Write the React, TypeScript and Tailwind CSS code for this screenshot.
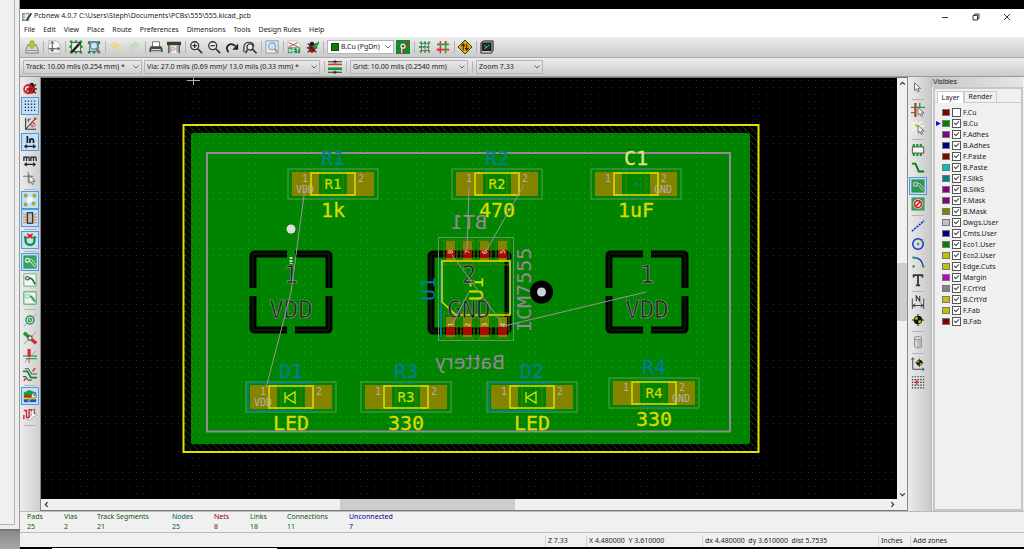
import { useState } from 'react';
import type { ReactNode } from 'react';
import clsx from 'clsx';

const pcbFont = "font-['DejaVu_Sans_Mono',monospace]";

const zoneIcon = (bg: string, fg: string) => (
  <>
    <rect x="1" y="1" width="14" height="14" fill={bg} stroke="#2f9a50" />
    <path d="M5.5 6h3c2 0 3 5 6 6" fill="none" stroke={fg} strokeWidth="3.6" />
    <path d="M5.5 6h3c2 0 3 5 6 6" fill="none" stroke="#22874a" strokeWidth="1.4" />
    <circle cx="5" cy="6" r="2.2" fill={bg} stroke={fg} strokeWidth="1.4" />
  </>
);

const target = (
  <>
    <circle cx="8" cy="8" r="4.5" fill="#e5d200" stroke="#111" />
    <path d="M8 8V3.5A4.5 4.5 0 0 1 12.5 8zM8 8v4.5A4.5 4.5 0 0 1 3.5 8z" fill="#111" />
    <path d="M8 1v14M1 8h14" stroke="#111" strokeWidth="1" />
  </>
);

const bug = (
  <>
    <path d="M3 4l3 2M13 4l-3 2M2 9h3M14 9h-3M3 14l3-2M13 14l-3-2" stroke="#222" strokeWidth="1.2" />
    <ellipse cx="8" cy="9.500" rx="4" ry="5" fill="#b3181c" />
    <circle cx="8" cy="4.500" r="2.600" fill="#1c1c1c" />
    <path d="M8 5v9" stroke="#222" />
    <circle cx="6.200" cy="9" r="1" fill="#222" />
    <circle cx="9.800" cy="11" r="1" fill="#222" />
  </>
);

const cursor = (x: number, y: number) => (
  <path
    transform={`translate(${x} ${y})`}
    d="M0 0v9l2.200-2 1.600 3.400 1.600-.8L3.900 6.400H7z"
    fill="#f4f4f4"
    stroke="#555"
    strokeWidth="0.9"
  />
);

const lens = (
  <>
    <circle cx="6.500" cy="6.500" r="4.500" fill="#eee" stroke="#333" strokeWidth="1.500" />
    <path d="M10 10l5 5" stroke="#333" strokeWidth="2" />
  </>
);

const chip = (
  <>
    <path d="M2 3h12M2 13h12" stroke="#149a2c" strokeWidth="3.500" strokeDasharray="2.500 1.500" />
    <rect x="1.500" y="4.500" width="13" height="7" fill="#f4f4f4" stroke="#444" />
  </>
);

const icons: Record<string, ReactNode> = {
  save: (
    <>
      <path d="M3 6h10l2 5v4H1v-4z" fill="#d5d5d5" stroke="#777" />
      <path d="M2 12h12" stroke="#888" />
      <path d="M6 1h4v4h3l-5 5-5-5h3z" fill="#a5cf3a" stroke="#79a41e" strokeWidth="0.7" />
    </>
  ),
  page: (
    <>
      <path d="M2 1h9l4 4v10H2z" fill="#fafafa" stroke="#aaa" />
      <path d="M6 2v11M2 10h12M4 4l2-2 2 2M4 11l2 2 2-2M12 8l2 2-2 2" fill="none" stroke="#333" />
    </>
  ),
  moduleEditor: (
    <>
      <rect x="3" y="3" width="10" height="10" fill="#eee" stroke="#444" />
      <path d="M1 2h14M1 14h14M2 6v5M14 6v5" stroke="#179a30" strokeWidth="3" strokeDasharray="3 2.500" />
      <path d="M12 2l2 2-9 10-3 1 1-3z" fill="#222" />
      <path d="M11 4l1 1" stroke="#fff" />
    </>
  ),
  moduleViewer: (
    <>
      <rect x="3" y="2" width="10" height="11" fill="#b9cbe0" stroke="#666" />
      <path d="M1 3h14M1 14h14" stroke="#179a30" strokeWidth="3" strokeDasharray="3 2.500" />
      <circle cx="8" cy="6.500" r="4" fill="#d4e5fa" stroke="#5f88b8" strokeWidth="1.300" />
      <path d="M10.500 9.500l4 5" stroke="#777" strokeWidth="2.500" />
    </>
  ),
  undo: <path d="M7 2L2 6l5 4V7.500c4 0 4.500 3 2 6.500 6-3 5.500-9.500-2-9.500z" fill="#f0dc8c" stroke="#e2c878" strokeWidth="0.6" />,
  redo: <path d="M9 2l5 4-5 4V7.500c-4 0-4.500 3-2 6.500-6-3-5.500-9.500 2-9.500z" fill="#bfe3b6" stroke="#a8d4a0" strokeWidth="0.6" />,
  print: (
    <>
      <path d="M4 8V2h8v6" fill="#fff" stroke="#666" />
      <path d="M2 7h12l1.500 3v4H.5v-4z" fill="#444" />
      <path d="M2.500 11h11M2 13.500h12" stroke="#ddd" strokeWidth="1.300" />
    </>
  ),
  plot: (
    <>
      <path d="M2 5v10M14 5v10" stroke="#665" strokeWidth="1.800" />
      <rect x="4" y="5" width="8" height="10" fill="#f5efe6" />
      <path d="M0 2h16v4H0z" fill="#3b3b2b" />
      <path d="M7 7.500l3 2.500-3 2.500z" fill="none" stroke="#e08a80" />
      <path d="M4.500 7v7M11.500 7v7" stroke="#3f66b0" />
    </>
  ),
  zoomIn: <>{lens}<path d="M4 6.500h5M6.500 4v5" stroke="#222" strokeWidth="1.300" /></>,
  zoomOut: <>{lens}<path d="M4 6.500h5" stroke="#222" strokeWidth="1.300" /></>,
  redraw: (
    <>
      <path d="M4 14C-1 7 6 2 12 7" fill="none" stroke="#222" strokeWidth="2" />
      <path d="M15 4v7H8.500z" fill="#222" />
    </>
  ),
  zoomFit: (
    <>
      <path d="M1 14V7.500C2 1 12 1 12.500 7.500" fill="none" stroke="#333" strokeWidth="1.300" />
      <circle cx="8" cy="8" r="3.500" fill="#eee" stroke="#333" strokeWidth="1.400" />
      <path d="M5 11l-2 4M10.500 10.500l5 4.500" stroke="#333" strokeWidth="1.800" />
    </>
  ),
  find: (
    <>
      <rect x="1" y="1" width="14" height="14" fill="#e7e9ec" stroke="#8d9299" />
      <circle cx="8" cy="7" r="4" fill="#c8dff8" stroke="#86a8ce" strokeWidth="1.300" />
      <path d="M11 10l3 3.500" stroke="#888" strokeWidth="2" />
    </>
  ),
  netlist: (
    <>
      <path d="M1 1h10l4 4v4H1z" fill="#f4f4f4" stroke="#bbb" strokeWidth="0.700" />
      <path d="M2 3l11 5M2 8l10-5" stroke="#c33" />
      <path d="M1 8.500h14V15H1z" fill="#278f45" />
      <path d="M2.500 14V10l2 4v-4M9 10H6.500v4H9M6.500 12H9M10.500 10H14M12.200 10v4" fill="none" stroke="#fff" strokeWidth="0.900" />
    </>
  ),
  drc: <>{bug}<path d="M9 6l2.500 3L16 2" fill="none" stroke="#169b36" strokeWidth="2.200" /></>,
  layerPair: (
    <>
      <rect width="16" height="16" fill="#148a2a" />
      <path d="M8 15V9l6-7" stroke="#cc2222" strokeWidth="2.500" fill="none" />
      <circle cx="8" cy="7" r="2.300" fill="none" stroke="#eee" strokeWidth="1.400" />
      <path d="M6.500 9.500V15" stroke="#ddd" strokeWidth="1.500" />
    </>
  ),
  modeModule: (
    <>
      <path d="M3 4h10M3 8h10M3 12h10M4 2v12M8 2v12M12 2v12" stroke="#555" strokeWidth="0.900" />
      <path d="M2 3h12M2 13h12M1 8h14" stroke="#26a644" strokeWidth="2.500" strokeDasharray="2.500 2.200" />
    </>
  ),
  modeTrack: (
    <>
      <path d="M5 1v14M1 11h14" stroke="#d33" strokeWidth="1.800" />
      <path d="M11 1v14M1 5h14" stroke="#27a044" strokeWidth="1.800" />
      <path d="M11 1v3M1 11h3" stroke="#d33" strokeWidth="2" />
    </>
  ),
  freeroute: (
    <>
      <path d="M8 0l8 8-8 8-8-8z" fill="#eea500" stroke="#2a2a10" />
      <path d="M6 12V5M4 7l2-2.500L8 7M10 4v7M8 9l2 2.500L12 9" fill="none" stroke="#222" strokeWidth="1.200" />
    </>
  ),
  console: (
    <>
      <path d="M1 3l3-2h11v11l-2 3H1z" fill="#9a9a9a" stroke="#222" />
      <rect x="3" y="3.500" width="9.500" height="8.500" fill="#1b2d24" stroke="#111" />
      <path d="M5 6l2.500 2L5 10M7 9l4-3.500" fill="none" stroke="#5fc98b" />
      <path d="M2 13.500h10" stroke="#eee" />
    </>
  ),
  trackWidth: (
    <>
      <path d="M0 5h16" stroke="#d33" strokeWidth="1.800" />
      <path d="M0 10h16" stroke="#159a2d" strokeWidth="3" />
      <path d="M0 2h5M11 2h5M0 14h5M11 14h5M8 0v4M8 12v4" stroke="#333" strokeWidth="1.200" />
      <path d="M5 2h6M5 14h6" stroke="#333" strokeWidth="1.800" />
    </>
  ),
  drcOff: (
    <>
      <g transform="translate(2 0)">{bug}</g>
      <circle cx="6" cy="9.500" r="4.800" fill="none" stroke="#cf1f25" strokeWidth="1.900" />
      <path d="M2.500 13l7-7" stroke="#cf1f25" strokeWidth="1.800" />
    </>
  ),
  grid: <path d="M2 2.500h13M2 6h13M2 9.500h13M2 13h13" stroke="#1d3450" strokeWidth="1.500" strokeDasharray="1.500 2" />,
  polar: (
    <>
      <path d="M3 1v13h12M3 14L14 2" fill="none" stroke="#333" strokeWidth="1.200" />
      <path d="M6 6V2M6 4c1-2 2-2 3-1.500" fill="none" stroke="#333" />
      <circle cx="11.500" cy="9" r="2.400" fill="none" stroke="#b55" />
      <path d="M10 12l3-6" stroke="#b55" />
      <circle cx="14" cy="2" r="1.500" fill="#e22" />
    </>
  ),
  inches: (
    <>
      <path d="M5 1v8M8 9V4M8 6c1-2 4-2 4 .5V9" fill="none" stroke="#222" strokeWidth="2" />
      <path d="M2 13h12M4.500 11L2 13l2.500 2M11.500 11l2.500 2-2.500 2" fill="none" stroke="#222" strokeWidth="1.300" />
    </>
  ),
  mm: (
    <>
      <path d="M1 9V4M1 6c1-2 3-2 3 0v3M4 6c1-2 3-2 3 0v3M9 9V4M9 6c1-2 3-2 3 0v3M12 6c1-2 3-2 3 0v3" fill="none" stroke="#222" strokeWidth="1.400" />
      <path d="M2 13h12M4.500 11L2 13l2.500 2M11.500 11l2.500 2-2.500 2" fill="none" stroke="#222" strokeWidth="1.300" />
    </>
  ),
  crosshair: <><path d="M6 1v12M0 6h12" stroke="#666" />{cursor(7, 5)}</>,
  ratsnest: (
    <>
      <path d="M3 3l10 10M13 2L3 14M8 3v9M4 8h9" stroke="#f7f7f7" strokeWidth="1.500" />
      {[[3, 3], [13, 3], [3, 13], [12, 12]].map(([x, y]) => (
        <circle key={`${x}-${y}`} cx={x} cy={y} r="1.800" fill="#b3c51a" stroke="#6c7a10" strokeWidth="0.700" />
      ))}
    </>
  ),
  moduleRats: (
    <>
      <path d="M0 3l5 2M0 7h5M0 10h5M0 14l5-2M16 3l-5 2M16 7h-5M16 10h-5M16 14l-5-2" stroke="#e9812c" strokeWidth="1.200" />
      <rect x="5" y="2" width="6" height="12" fill="#bbb" stroke="#333" strokeWidth="1.400" />
    </>
  ),
  autoDelete: (
    <>
      <path d="M1 5h2v4c0 6 10 6 10 0V5h2" fill="none" stroke="#128c35" strokeWidth="2.600" />
      <path d="M5 1l6 5M11 1L5 6" stroke="#d81f26" strokeWidth="2.200" />
    </>
  ),
  zoneFilled: zoneIcon('#3f9f66', '#cfeeda'),
  zoneOff: (
    <>
      <rect x="1" y="1" width="14" height="14" fill="#f6f6f6" stroke="#5eae78" />
      <path d="M7 6h2c2 0 3 4 5 7" fill="none" stroke="#187a35" strokeWidth="2" />
      <circle cx="5" cy="6" r="2" fill="none" stroke="#333" strokeWidth="1.200" />
    </>
  ),
  zoneOutline: zoneIcon('#eef4ef', '#a8d4b4'),
  viaSketch: (
    <>
      <path d="M1 15L15 1" stroke="#999" />
      <circle cx="8" cy="8" r="4.500" fill="none" stroke="#2e9a55" strokeWidth="1.800" />
      <circle cx="8" cy="8" r="1.800" fill="none" stroke="#2e9a55" strokeWidth="1.300" />
    </>
  ),
  padSketch: (
    <>
      <path d="M1 15L15 1" stroke="#999" />
      <path d="M1 2l6 5" stroke="#169a2f" strokeWidth="4" />
      <path d="M10 10l5 4" stroke="#dc2525" strokeWidth="4" />
      <circle cx="8" cy="8" r="2.500" fill="#eee" stroke="#555" strokeWidth="1.300" />
    </>
  ),
  trackSketch: (
    <>
      <path d="M2 15L15 2" stroke="#999" />
      <path d="M7 0v9" stroke="#dc2525" strokeWidth="3.500" />
      <path d="M0 8h6" stroke="#444" />
      <path d="M3 11h13M8 8h8" stroke="#31a950" strokeWidth="1.500" />
      <path d="M7 11v5" stroke="#dc2525" />
    </>
  ),
  contrast: (
    <>
      <path d="M0 5h5l4 7h7" fill="none" stroke="#138b2d" strokeWidth="2" />
      <path d="M2 2h4l4 6h6M0 11h3l3 4h4" fill="none" stroke="#555" strokeWidth="1.200" />
      <path d="M14 1l-3 4M3 13l-2 3" stroke="#dc2525" strokeWidth="1.600" />
    </>
  ),
  layers: (
    <>
      <path d="M1 4l6-3 8 3v9H1z" fill="#1b9d3b" />
      <path d="M1 7h14v3H1z" fill="#d3242b" />
      <path d="M1 10h14v2H1z" fill="#edd821" />
      <path d="M1 12h14v3H1z" fill="#2451b8" />
      <path d="M4 15l6-6a3 3 0 0 1 4-4l-2 2 1 1 2-2a3 3 0 0 1-4 4l-5 5z" fill="#f4f4f4" stroke="#555" strokeWidth="0.700" />
    </>
  ),
  microwave: (
    <>
      <path d="M1 4h3v8h3V3h3v6h3V2M1 14V9" fill="none" stroke="#cf2830" strokeWidth="1.600" />
      <path d="M5 15l5-6a3 3 0 0 1 3-5l-1 3 1 1 2-1a3 3 0 0 1-3 4l-5 5z" fill="#f7f7f7" stroke="#888" strokeWidth="0.700" />
    </>
  ),
  select: <>{cursor(4, 2)}</>,
  highlight: (
    <>
      <path d="M5 0v16" stroke="#dc2525" strokeWidth="2.500" />
      <path d="M0 5h16M10 0v5M0 11h5" stroke="#249a42" strokeWidth="1.600" />
      {cursor(8, 5)}
    </>
  ),
  localRats: (
    <>
      <path d="M6 6L0 0M6 6l7-6M6 6H0M6 6v10M6 6l-6 7M6 6h10M6 6V0" stroke="#fafafa" strokeWidth="1.300" />
      <circle cx="6" cy="5" r="2" fill="#d6ce18" />
      {cursor(8, 5)}
    </>
  ),
  addModule: chip,
  addTrack: <path d="M1 3h4l4 9h6" fill="none" stroke="#087a1c" strokeWidth="2.200" />,
  addZone: zoneIcon('#2f9553', '#b9c9bf'),
  keepout: (
    <>
      <rect x="0.500" y="0.500" width="15" height="15" fill="#409d60" />
      <circle cx="8" cy="8" r="5.500" fill="#fff" />
      <circle cx="8" cy="8" r="4" fill="none" stroke="#d61f27" strokeWidth="2" />
      <path d="M5 11l6-6" stroke="#d61f27" strokeWidth="1.800" />
    </>
  ),
  line: <path d="M1 14L15 2" stroke="#1732c0" strokeWidth="1.800" strokeDasharray="2.500 1" />,
  circle: (
    <>
      <circle cx="8" cy="8" r="6" fill="none" stroke="#1732c0" strokeWidth="1.700" />
      <circle cx="8" cy="8" r="1.500" fill="#31a34c" />
      <circle cx="12.500" cy="4" r="1.500" fill="#31a34c" />
    </>
  ),
  arc: (
    <>
      <path d="M3 3c6 0 10 4 11 10" fill="none" stroke="#1732c0" strokeWidth="1.700" />
      <circle cx="3" cy="3" r="1.500" fill="#31a34c" />
      <circle cx="3" cy="13" r="1.500" fill="#31a34c" />
      <circle cx="14" cy="13" r="1.500" fill="#31a34c" />
    </>
  ),
  text: <path d="M3 5V2.500h10V5M8 3v11M5.500 14h5" fill="none" stroke="#333" strokeWidth="2" />,
  dimension: (
    <>
      <path d="M1.500 4v12M14.500 4v12M2 12h12M5 10l-3 2 3 2M11 10l3 2-3 2" fill="none" stroke="#333" />
      <path d="M6 7V1l4 6V1" fill="none" stroke="#333" strokeWidth="1.200" />
    </>
  ),
  target,
  trash: (
    <>
      <path d="M4 4v9c0 2.500 8 2.500 8 0V4z" fill="#bcbcb8" stroke="#777" strokeWidth="0.800" />
      <ellipse cx="8" cy="3.500" rx="4.500" ry="1.800" fill="#deded9" stroke="#777" strokeWidth="0.800" />
      <path d="M6 6v8" stroke="#e8e8e8" strokeWidth="1.500" />
    </>
  ),
  origin: (
    <>
      <path d="M2 1v13h13M.5 3L2 1l1.500 2M13 12.500l2 1.500-2 1.500" fill="none" stroke="#333" />
      <g transform="translate(4 1) scale(.7)">{target}</g>
    </>
  ),
  gridOrigin: (
    <>
      <path d="M1 2h14M1 5.200h14M1 8.400h14M1 11.600h14M1 14.600h14" stroke="#333" strokeWidth="1.400" strokeDasharray="1.600 1.600" />
      <path d="M6.500 6v5M4 8.400h5" stroke="#e02020" strokeWidth="1.500" />
    </>
  ),
};

const SEP = '|';

const topTools = ['save', SEP, 'page', SEP, 'moduleEditor', 'moduleViewer', SEP, 'undo', 'redo', SEP, 'print', 'plot', SEP, 'zoomIn', 'zoomOut', 'redraw', 'zoomFit', SEP, 'find', SEP, 'netlist', 'drc', SEP];
const topToolsEnd = ['layerPair', SEP, 'modeModule', 'modeTrack', SEP, 'freeroute', SEP, 'console'];
const leftTools = ['drcOff', 'grid', 'polar', 'inches', 'mm', 'crosshair', SEP, 'ratsnest', 'moduleRats', SEP, 'autoDelete', SEP, 'zoneFilled', 'zoneOff', 'zoneOutline', SEP, 'viaSketch', 'padSketch', 'trackSketch', 'contrast', SEP, 'layers', 'microwave', SEP];
const rightTools = ['select', SEP, 'highlight', 'localRats', SEP, 'addModule', 'addTrack', 'addZone', 'keepout', SEP, 'line', 'circle', 'arc', 'text', SEP, 'dimension', 'target', SEP, 'trash', SEP, 'origin', 'gridOrigin'];
const pressed = ['grid', 'inches', 'ratsnest', 'moduleRats', 'autoDelete', 'zoneFilled', 'layers', 'addZone'];

const menus = ['File', 'Edit', 'View', 'Place', 'Route', 'Preferences', 'Dimensions', 'Tools', 'Design Rules', 'Help'];

const layers = [
  { name: 'F.Cu', color: '#840000' },
  { name: 'B.Cu', color: '#008400' },
  { name: 'F.Adhes', color: '#840084' },
  { name: 'B.Adhes', color: '#000084' },
  { name: 'F.Paste', color: '#840000' },
  { name: 'B.Paste', color: '#00c2c2' },
  { name: 'F.SilkS', color: '#008484' },
  { name: 'B.SilkS', color: '#840084' },
  { name: 'F.Mask', color: '#840084' },
  { name: 'B.Mask', color: '#848400' },
  { name: 'Dwgs.User', color: '#c2c2c2' },
  { name: 'Cmts.User', color: '#000084' },
  { name: 'Eco1.User', color: '#008400' },
  { name: 'Eco2.User', color: '#c2c200' },
  { name: 'Edge.Cuts', color: '#c2c200' },
  { name: 'Margin', color: '#c200c2' },
  { name: 'F.CrtYd', color: '#848484' },
  { name: 'B.CrtYd', color: '#c2c200' },
  { name: 'F.Fab', color: '#c2c200' },
  { name: 'B.Fab', color: '#840000' },
];

const stats = [
  { label: 'Pads', value: '25', className: 'w-[37px] text-[#0a5a0a]' },
  { label: 'Vias', value: '2', className: 'w-[33px] text-[#0a5a0a]' },
  { label: 'Track Segments', value: '21', className: 'w-[75px] text-[#0a5a0a]' },
  { label: 'Nodes', value: '25', className: 'w-[42px] text-[#005a5a]' },
  { label: 'Nets', value: '8', className: 'w-[36px] text-[#8a0000]' },
  { label: 'Links', value: '18', className: 'w-[37px] text-[#0a5a0a]' },
  { label: 'Connections', value: '11', className: 'w-[62px] text-[#0a5a0a]' },
  { label: 'Unconnected', value: '7', className: 'text-[#00008a]' },
];

function ToolStrip({ items, vertical = false }: { items: string[]; vertical?: boolean }) {
  return (
    <div className={clsx('flex shrink-0 items-center', vertical && 'flex-col')}>
      {items.map((item, i) =>
        item === SEP ? (
          <span key={i} className={clsx('flex items-center justify-center', vertical ? 'h-1 w-full' : 'h-[18px] w-1')}>
            <span className={clsx('bg-[#b4b4b4]', vertical ? 'h-px w-3' : 'h-3 w-px')} />
          </span>
        ) : (
          <button
            key={i}
            type="button"
            aria-label={item}
            className={clsx(
              'flex size-[18px] items-center justify-center border',
              pressed.includes(item) ? 'border-[#4a9be0] bg-[#c4dff6]' : 'border-transparent',
            )}
          >
            <svg viewBox="0 0 16 16" className="size-[14px]">{icons[item]}</svg>
          </button>
        ),
      )}
    </div>
  );
}

function ToolSelect({ label, value, className, children }: { label: string; value: string; className: string; children?: ReactNode }) {
  return (
    <div className={clsx('relative flex h-[14px] shrink-0 items-center border border-[#b5b5b5]', className)}>
      {children}
      <select aria-label={label} defaultValue={value} className="h-full min-w-0 flex-1 appearance-none bg-transparent pl-[2px] text-[7px] leading-3 outline-none">
        <option>{value}</option>
      </select>
      <svg viewBox="0 0 6 4" className="pointer-events-none absolute right-[2px] h-1 w-[6px]">
        <path d="M0.500 0.500L3 3l2.500-2.500" fill="none" stroke="#555" strokeWidth="0.900" />
      </svg>
    </div>
  );
}

interface PartProps {
  cx: number;
  cy: number;
  name: string;
  value: string;
  diode?: boolean;
  pin1?: string;
  pin2?: string;
  selected?: boolean;
}

// Two-pad SMD footprint: courtyard, pads, fab outline, reference and value
function Part({ cx, cy, name, value, diode, pin1, pin2, selected }: PartProps) {
  const nameColor = selected ? '#dfe08c' : '#007f94';
  return (
    <g transform={`translate(${cx} ${cy})`} textAnchor="middle">
      <rect x="-45" y="-15" width="90" height="30" fill="none" stroke="#5f9a5f" />
      <rect x="-41" y="-12" width="27" height="24" fill="#848400" />
      <rect x="14" y="-12" width="27" height="24" fill="#848400" />
      <path d="M-10-11v22M10-11v22" stroke="#4c7a00" />
      <path d="M-13-14h26M-13 14h26" stroke="#008484" />
      {diode && <path d="M24-14h-67v28h67" fill="none" stroke="#008484" strokeWidth="1.500" />}
      <rect x="-22" y="-11" width="44" height="22" fill="none" stroke="#e0e000" strokeWidth="1.500" />
      {diode && <path d="M-6-5V6M4-5V6L-5 0.500z" fill="none" stroke="#e0e000" strokeWidth="1.300" />}
      {!diode && !selected && <text y="5" fontSize="14" fill="#d8d800" stroke="#d8d800" strokeWidth="0.200">{name}</text>}
      {selected && <path d="M-2 0h4M0-2v4" stroke="#008484" />}
      <text y="-19" fontSize="20" fill={nameColor} stroke={nameColor} strokeWidth="0.300">{name}</text>
      <text y="33" fontSize="20" fill="#dada00" stroke="#dada00" strokeWidth="0.300">{value}</text>
      <g fontSize="10" fill="#b4b0b0">
        <text x="-28" y="-2">1</text>
        <text x="28" y="-2">2</text>
        {pin1 && <text x="-28" y="9">{pin1}</text>}
        {pin2 && <text x="27" y="9">{pin2}</text>}
      </g>
    </g>
  );
}

function ThermalPad({ cx }: { cx: number }) {
  const corner = 'M-38-4V-36q0-2 2-2H-4';
  return (
    <g transform={`translate(${cx} 292)`}>
      {['', 'scale(-1 1)', 'scale(1 -1)', 'scale(-1 -1)'].map((t) => (
        <g key={t} transform={t} fill="none">
          <path d={corner} stroke="#000" strokeWidth="7" />
          <path d={corner} stroke="#003800" />
        </g>
      ))}
      <g textAnchor="middle" fontSize="24" fill="#042c04" stroke="#a193a1" strokeWidth="0.600">
        <text y="-9">1</text>
        <text y="26">VDD</text>
      </g>
    </g>
  );
}

function Board() {
  const pins = [446, 463, 480, 498];
  return (
    <svg viewBox="41 78 856 421" className={clsx('block size-full bg-black', pcbFont)}>
      <defs>
        <pattern id="dots" width="7" height="7" patternUnits="userSpaceOnUse">
          <rect x="3" y="3" width="1" height="1" fill="#fff" opacity="0.160" />
        </pattern>
        <pattern id="hatch" width="7" height="7" patternUnits="userSpaceOnUse">
          <path d="M0 0l7 7" stroke="#083c08" strokeWidth="1" />
        </pattern>
      </defs>
      <rect x="183" y="125" width="575" height="327" fill="url(#hatch)" />
      <rect x="191" y="133" width="559" height="311" rx="2" fill="#008400" />
      <rect x="41" y="78" width="856" height="421" fill="url(#dots)" />
      <rect x="183.500" y="125" width="575" height="327" fill="none" stroke="#e2e200" strokeWidth="2" />
      <rect x="207" y="153" width="523" height="278.500" fill="none" stroke="#968896" strokeWidth="2" />

      <Part cx={333} cy={184} name="R1" value="1k" pin1="VDD" />
      <Part cx={497} cy={184} name="R2" value="470" />
      <Part cx={636} cy={184} name="C1" value="1uF" pin2="GND" selected />
      <Part cx={291} cy={397} name="D1" value="LED" pin1="VDD" diode />
      <Part cx={406} cy={397} name="R3" value="330" />
      <Part cx={532} cy={397} name="D2" value="LED" diode />
      <Part cx={654} cy={393} name="R4" value="330" pin2="GND" />

      <ThermalPad cx={291} />
      <ThermalPad cx={647} />

      {/* battery ground pad with the timer on top */}
      <rect x="431" y="254" width="77" height="77" rx="2" fill="none" stroke="#000" strokeWidth="7" />
      <rect x="431" y="254" width="77" height="77" rx="2" fill="none" stroke="#003800" />
      <rect x="438.500" y="237.500" width="75" height="103" fill="none" stroke="#5f9a5f" />
      {pins.map((x) => (
        <g key={x}>
          <rect x={x - 2} y="240" width="13" height="25" fill="none" stroke="#4c7a00" />
          <rect x={x - 2} y="313" width="13" height="25" fill="none" stroke="#4c7a00" />
          <rect x={x} y="241" width="9" height="20" fill="#848400" />
          <rect x={x} y="317" width="9" height="20" fill="#848400" />
          <rect x={x} y="250" width="9" height="8" fill="#a80c00" />
          <rect x={x} y="327" width="9" height="8" fill="#a80c00" />
        </g>
      ))}
      <path d="M441 259v78M510.500 259v55" stroke="#008484" strokeWidth="2" />
      <path d="M442 261h68v54h-54l-14-13z" fill="none" stroke="#e0e000" strokeWidth="1.500" />
      <g fontSize="7" fill="#e6e0d8" textAnchor="middle">
        {['8', '7', '6', '5'].map((n, i) => (
          <text key={n} transform={`translate(${pins[i] + 7} 252) rotate(-90)`}>{n}</text>
        ))}
        {['1', '2', '3', '4'].map((n, i) => (
          <text key={n} transform={`translate(${pins[i] + 7} 325) rotate(-90)`}>{n}</text>
        ))}
      </g>
      <g fontSize="20">
        <text transform="translate(435 301) rotate(-90)" fill="#007f94">U1</text>
        <text transform="translate(483 301) rotate(-90)" fill="#dada00">U1</text>
        <text transform="translate(531 332) rotate(-90)" fill="#968896">ICM7555</text>
        <text transform="translate(487 229) scale(-1 1)" fill="#968896">BT1</text>
        <text transform="translate(505 369) scale(-1 1)" fill="#968896" className="font-['DejaVu_Sans',sans-serif] text-[19px]">Battery</text>
      </g>
      <g textAnchor="middle" fontSize="24" fill="#042c04" stroke="#a193a1" strokeWidth="0.600">
        <text x="469" y="283">2</text>
        <text x="469" y="318">GND</text>
      </g>

      <circle cx="541.500" cy="292" r="11.500" fill="#000" />
      <circle cx="541.500" cy="292" r="4.500" fill="#d0d0d0" />
      <circle cx="291" cy="229" r="4.500" fill="#dedede" />
      <path d="M291 257v7" stroke="#b8dcb8" strokeWidth="3" strokeDasharray="2 1" />

      <g fill="none" stroke="#a090a0">
        <path d="M305 188l-14 104-25 96" />
        <path d="M469 187l-2 65M524 185l-38 66M452 255l52 71M469 292l-17 33M504 326l142-34" />
      </g>
      <path d="M193.500 78v7M187 80.500h13" stroke="#b0b0b0" />
    </svg>
  );
}

function LayerPanel() {
  const [visible, setVisible] = useState<string[]>(layers.slice(1).map((l) => l.name));

  const toggle = (name: string) =>
    setVisible((prev) => (prev.includes(name) ? prev.filter((n) => n !== name) : [...prev, name]));

  return (
    <aside className="flex w-[93px] shrink-0 flex-col border-l border-[#bbb] bg-[#f0f0f0] pr-px">
      <h2 className="h-[10px] bg-gradient-to-r from-[#c8c8c8] to-[#e6e6e6] pl-px font-['Liberation_Sans',sans-serif] text-[7px] leading-[9px]">Visibles</h2>
      <div className="ml-px flex flex-1 flex-col border-2 border-[#c6c6c6] bg-[#f0f0f0]">
        <div role="tablist" className="flex items-end border-b border-[#ccc] pt-[2px] pl-[2px]">
          <button type="button" role="tab" aria-selected="true" className="-mb-px h-3 w-[27px] border border-b-0 border-[#ccc] bg-white leading-[11px]">Layer</button>
          <button type="button" role="tab" aria-selected="false" className="h-[11px] w-[33px] border border-b-0 border-[#ccc] leading-[10px]">Render</button>
        </div>
        <ul className="pt-1">
          {layers.map(({ name, color }) => (
            <li key={name} className="flex h-[11px] items-center">
              <svg viewBox="0 0 6 6" className="mr-px ml-px size-[5px]">
                {name === 'B.Cu' && <path d="M0 0l6 3-6 3z" fill="#1010e0" />}
              </svg>
              <label className="flex items-center gap-px">
                <span className="h-[7px] w-2 border border-[#777]" style={{ backgroundColor: color }} />
                <input
                  type="checkbox"
                  checked={visible.includes(name)}
                  onChange={() => toggle(name)}
                  className="ml-px grid size-[9px] appearance-none place-items-center border border-[#555] bg-white checked:after:mb-[2px] checked:after:block checked:after:h-[3px] checked:after:w-[5px] checked:after:-rotate-45 checked:after:border-b checked:after:border-l checked:after:border-[#444] checked:after:content-['']"
                />
                <span className="pl-px leading-[11px]">{name}</span>
              </label>
            </li>
          ))}
        </ul>
      </div>
    </aside>
  );
}

function ScrollArrow({ d, label }: { d: string; label: string }) {
  return (
    <button type="button" aria-label={label} className="flex size-[10px] shrink-0 items-center justify-center">
      <svg viewBox="0 0 6 6" className="size-[7px]"><path d={d} fill="none" stroke="#333" /></svg>
    </button>
  );
}

export default function App() {
  return (
    <div className="flex h-screen overflow-hidden bg-black font-['Noto_Sans','Open_Sans',sans-serif] text-[7px] text-[#1a1a1a]">
      {/* edge of the window behind */}
      <div className="flex w-5 shrink-0 flex-col">
        <div className="flex flex-1 bg-[#ededed]">
          <div className="mb-1 flex-1 border-r border-b border-[#b4b4b4] bg-[#f0f0f0]" />
          <div className="w-[5px] border-r border-[#999]" />
        </div>
        <div className="h-5 border-t-2 border-[#777] bg-gradient-to-b from-[#8a8a8a] to-[#a8a8a8]" />
      </div>

      <div className="flex min-w-0 flex-1 flex-col pt-[9px]">
        <header className="bg-white">
          <div className="flex h-[15px] items-center pl-[2px]">
            <svg viewBox="0 0 16 16" className="size-[10px]">
              <rect x="1" y="2" width="10" height="12" fill="#e5e5e5" stroke="#666" />
              <path d="M2 4h2M2 8h2M2 12h2" stroke="#179a30" strokeWidth="2" />
              <path d="M14 1l2 2-7 10-3 1 1-3z" fill="#333" />
              <path d="M12 4l2 2" stroke="#d33" />
            </svg>
            <h1 className="flex-1 pl-[2px] text-[7px] whitespace-nowrap">Pcbnew 4.0.7 C:\Users\Steph\Documents\PCBs\555\555.kicad_pcb</h1>
            <div className="flex gap-[21px] pr-3">
              {[
                { label: 'Minimize', d: 'M2 5.500h6' },
                { label: 'Restore', d: 'M2 3.500h4.500V8H2zM3.500 3V2H8v4.500H7' },
                { label: 'Close', d: 'M2 2l6 6M8 2L2 8' },
              ].map(({ label, d }) => (
                <button key={label} type="button" aria-label={label} className="size-[10px]">
                  <svg viewBox="0 0 10 10" className="size-[10px]"><path d={d} fill="none" stroke="#333" /></svg>
                </button>
              ))}
            </div>
          </div>
          <nav className="flex h-[13px] items-center gap-2 pl-1">
            {menus.map((menu) => (
              <button key={menu} type="button" className="whitespace-nowrap">{menu}</button>
            ))}
          </nav>
        </header>

        <div className="flex h-[21px] shrink-0 items-center border-b border-[#aaa] bg-gradient-to-b from-[#eee] to-[#cacaca] pl-[3px]">
          <ToolStrip items={topTools} />
          <ToolSelect label="Active layer" value="B.Cu (PgDn)" className="ml-[2px] w-[67px] bg-white pl-[3px]">
            <span className="size-2 border border-[#333] bg-[#008400]" />
          </ToolSelect>
          <ToolStrip items={topToolsEnd} />
        </div>
        <div className="flex h-[19px] shrink-0 items-center gap-[2px] border-b border-[#999] bg-gradient-to-b from-[#eee] to-[#cacaca] pl-[3px]">
          <ToolSelect label="Track width" value="Track: 10.00 mils (0.254 mm) *" className="w-[119px]" />
          <ToolSelect label="Via size" value="Via: 27.0 mils (0.69 mm)/ 13.0 mils (0.33 mm) *" className="w-[176px]" />
          <ToolStrip items={[SEP, 'trackWidth', SEP]} />
          <ToolSelect label="Grid" value="Grid: 10.00 mils (0.2540 mm)" className="w-[118px]" />
          <ToolStrip items={[SEP]} />
          <ToolSelect label="Zoom" value="Zoom 7.33" className="w-[67px]" />
        </div>

        <main className="flex min-h-0 flex-1">
          <div className="flex w-[21px] shrink-0 justify-center border-r border-[#888] bg-gradient-to-r from-[#ececec] to-[#cfcfcf] pt-[2px]">
            <ToolStrip items={leftTools} vertical />
          </div>

          <div className="grid min-w-0 flex-1 grid-cols-[1fr_10px] grid-rows-[1fr_11px] border-y border-[#777] bg-[#f0f0f0]">
            <div className="min-h-0 overflow-hidden"><Board /></div>
            <div className="flex flex-col">
              <ScrollArrow label="Scroll up" d="M1 4l2-2 2 2" />
              <div className="flex flex-1 flex-col">
                <div className="flex-[175]" />
                <div className="flex-[58] bg-[#cdcdcd]" />
                <div className="flex-[168]" />
              </div>
              <ScrollArrow label="Scroll down" d="M1 2l2 2 2-2" />
            </div>
            <div className="flex">
              <ScrollArrow label="Scroll left" d="M4 1L2 3l2 2" />
              <div className="flex flex-1">
                <div className="flex-[289]" />
                <div className="flex-[175] bg-[#cdcdcd]" />
                <div className="flex-[372]" />
              </div>
              <ScrollArrow label="Scroll right" d="M2 1l2 2-2 2" />
            </div>
          </div>

          <div className="flex w-6 shrink-0 border-l border-[#888] bg-gradient-to-r from-[#ececec] to-[#c8c8c8] pt-[2px] pl-px">
            <ToolStrip items={rightTools} vertical />
          </div>
          <LayerPanel />
        </main>

        <dl className="flex h-[22px] shrink-0 items-center border-y border-[#bbb] bg-[#f0f0f0] pl-[7px] leading-[10px]">
          {stats.map(({ label, value, className }) => (
            <div key={label} className={clsx('whitespace-nowrap', className)}>
              <dt>{label}</dt>
              <dd>{value}</dd>
            </div>
          ))}
        </dl>
        <footer className="flex h-[14px] shrink-0 items-center justify-end bg-[#f0f0f0] pt-[2px] leading-3 whitespace-pre">
          <span className="w-[41px] border-l border-[#d0d0d0] pl-[2px]">Z 7.33</span>
          <span className="w-[116px] border-l border-[#d0d0d0] pl-[2px]">X 4.480000  Y 3.610000</span>
          <span className="w-[176px] border-l border-[#d0d0d0] pl-[2px]">dx 4.480000  dy 3.610000  dist 5.7535</span>
          <span className="w-8 border-l border-[#d0d0d0] pl-[2px]">Inches</span>
          <span className="w-[114px] border-l border-[#d0d0d0] pl-[2px]">Add zones</span>
        </footer>
        <div className="flex h-[2px] shrink-0 items-end pl-8">
          <div className="h-px w-[225px] bg-white" />
        </div>
      </div>
    </div>
  );
}
